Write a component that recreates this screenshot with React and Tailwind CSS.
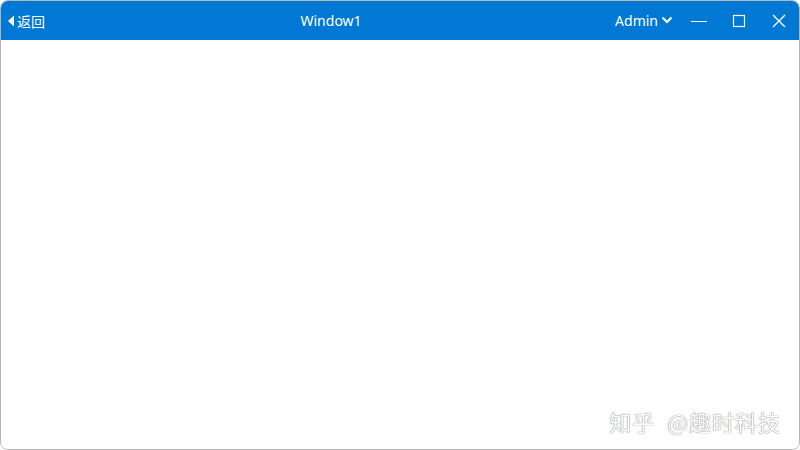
import React from "react";

export default function App() {
  return (
    <div className="w-[800px] h-[450px] bg-white" style={{ fontFamily: '"Segoe UI", "Noto Sans", "Noto Sans CJK SC", sans-serif' }}>
      <div className="w-full h-full rounded-[8px] border border-[#b5b5b5] overflow-hidden flex flex-col bg-white relative">
        <div className="h-[39px] bg-[#0078d4] flex items-center text-white shrink-0">
          <div className="flex items-center pl-[6px] pr-[2px] h-full">
            <svg width="8" height="12" viewBox="0 0 8 12" className="mr-[2px]">
              <path d="M7 0.5 L1 6 L7 11.5 Z" fill="white" />
            </svg>
            <span className="text-[14px] leading-none" style={{ fontFamily: '"Noto Sans CJK SC", sans-serif' }}>返回</span>
          </div>
          <div className="flex-1 text-center text-[14px] pb-[1px]" style={{ fontFamily: '"Noto Sans", sans-serif' }}>Window1</div>
          <div className="flex items-center h-full">
            <div className="flex items-center gap-[3px] pr-[6px] text-[14px] pb-[1px]" style={{ fontFamily: '"Noto Sans", sans-serif' }}>
              <span>Admin</span>
              <svg width="12" height="8" viewBox="0 0 12 8">
                <path d="M1.5 1.5 L6 6 L10.5 1.5" stroke="white" strokeWidth="2" fill="none" />
              </svg>
            </div>
            <div className="w-[40px] h-full flex items-center justify-center">
              <svg width="16" height="16" viewBox="0 0 16 16"><path d="M0 8.5 H16" stroke="white" strokeWidth="1" /></svg>
            </div>
            <div className="w-[40px] h-full flex items-center justify-center">
              <svg width="14" height="14" viewBox="0 0 14 14"><rect x="1.5" y="1.5" width="11" height="11" stroke="white" strokeWidth="1.2" fill="none" /></svg>
            </div>
            <div className="w-[40px] h-full flex items-center justify-center">
              <svg width="14" height="14" viewBox="0 0 14 14"><path d="M1 1 L13 13 M13 1 L1 13" stroke="white" strokeWidth="1.4" /></svg>
            </div>
          </div>
        </div>
        <div className="flex-1 bg-white" />
        <div
          className="absolute right-[18px] bottom-[17px] text-[22px] text-white leading-none flex items-center tracking-[1px]"
          style={{ fontFamily: '"Noto Sans CJK SC", sans-serif', textShadow: "0 0 1px #888, 0 0 1px #888" }}
        >
          <span>知乎</span>
          <span className="ml-[12px]">@趣时科技</span>
        </div>
      </div>
    </div>
  );
}
